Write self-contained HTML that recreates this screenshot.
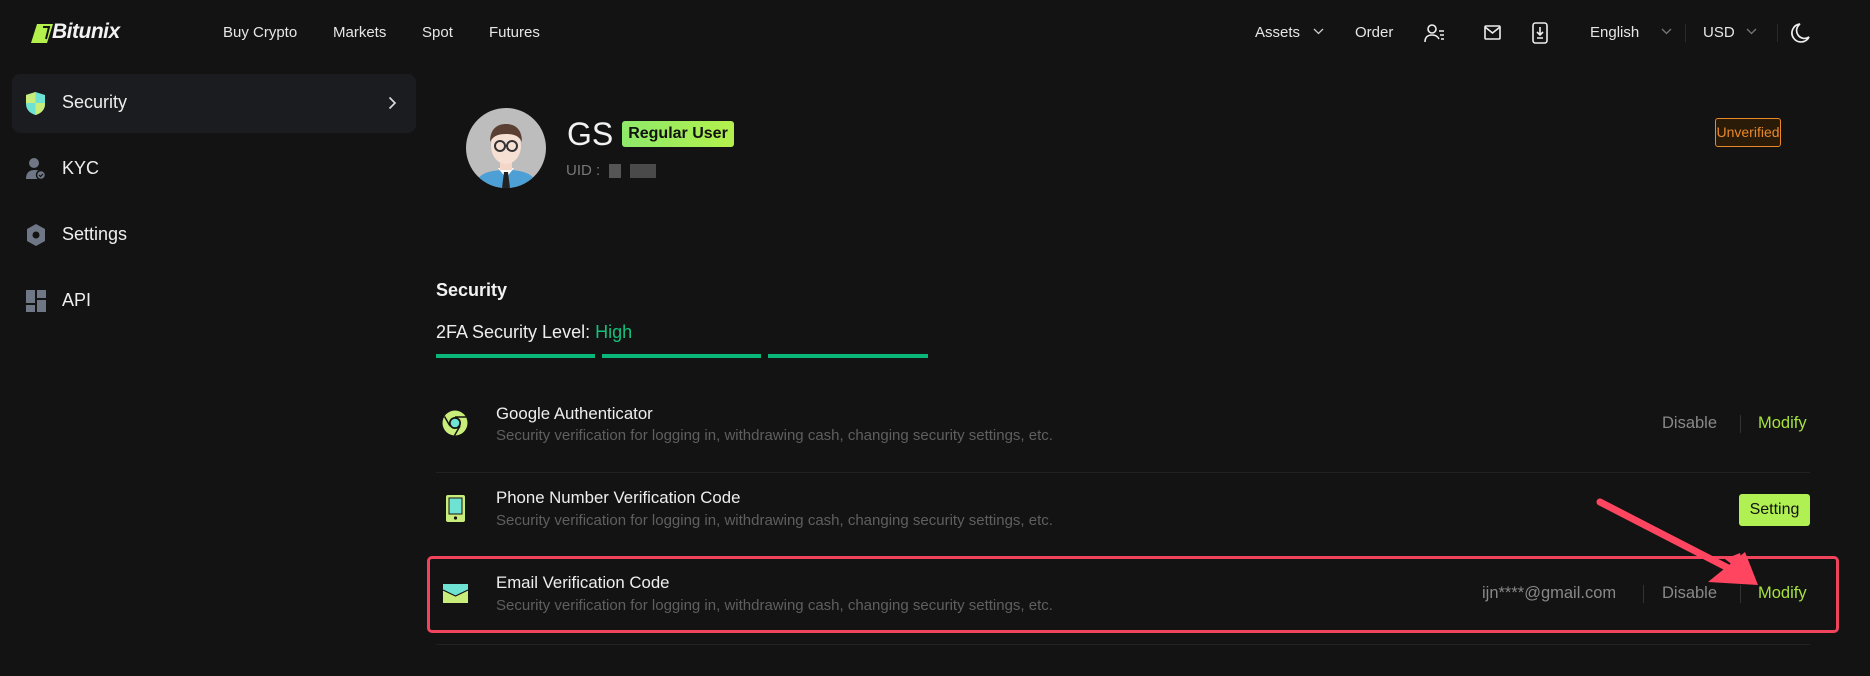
<!DOCTYPE html>
<html><head><meta charset="utf-8"><style>
*{margin:0;padding:0;box-sizing:border-box}
body{width:1870px;height:676px;background:#131313;font-family:"Liberation Sans",sans-serif;color:#e8e8e8;position:relative;overflow:hidden}
.a{position:absolute;white-space:nowrap}
.nav{font-size:15px;color:#e6e6e6;top:24px}
.side{font-size:18px;color:#eee;left:62px}
.t{font-size:16.8px;color:#eee;left:496px}
.d{font-size:15px;color:#5f5f5f;left:496px}
.act{font-size:16.5px}
.vd{position:absolute;width:1px;height:18px;background:#333}
</style></head><body>
<!-- logo -->
<svg class="a" style="left:31px;top:24px" width="22" height="19" viewBox="0 0 22 19"><path d="M6 0H22L16 19H0Z" fill="#b4f04c"/><path d="M12 3h6l-3 12" stroke="#131313" stroke-width="2" fill="none"/></svg>
<div class="a" style="left:52px;top:20px;font-size:21px;font-weight:bold;font-style:italic;color:#f2f2f2;letter-spacing:-0.5px">Bitunix</div>
<div class="a nav" style="left:223px">Buy Crypto</div>
<div class="a nav" style="left:333px">Markets</div>
<div class="a nav" style="left:422px">Spot</div>
<div class="a nav" style="left:489px">Futures</div>
<div class="a nav" style="left:1255px">Assets</div>
<svg class="a" style="left:1313px;top:28px" width="11" height="8"><path d="M1 1l4.5 4.5L10 1" stroke="#ccc" stroke-width="1.3" fill="none"/></svg>
<div class="a nav" style="left:1355px">Order</div>
<svg class="a" style="left:1424px;top:22px" width="22" height="22" viewBox="0 0 22 22" fill="none" stroke="#eee" stroke-width="1.6"><circle cx="8" cy="7" r="4"/><path d="M1 20c0-5 3-7 7-7s6 2 7 4"/><path d="M15 9h5M16 13h4M17 17h3"/></svg>
<svg class="a" style="left:1484px;top:25px" width="17" height="15"><rect x="1" y="1" width="15" height="13" rx="1" fill="none" stroke="#eee" stroke-width="1.6"/><path d="M1 2l7.5 6L16 2" stroke="#eee" stroke-width="1.6" fill="none"/></svg>
<svg class="a" style="left:1532px;top:22px" width="16" height="22"><rect x="1" y="1" width="14" height="20" rx="2.5" fill="none" stroke="#eee" stroke-width="1.6"/><path d="M8 5v8M5 10l3 3 3-3M5 16h6" stroke="#eee" stroke-width="1.6" fill="none"/></svg>
<div class="a nav" style="left:1590px">English</div>
<svg class="a" style="left:1661px;top:28px" width="11" height="8"><path d="M1 1l4.5 4.5L10 1" stroke="#777" stroke-width="1.3" fill="none"/></svg>
<div class="vd" style="left:1685px;top:24px;background:#2a2a2a"></div>
<div class="a nav" style="left:1703px">USD</div>
<svg class="a" style="left:1746px;top:28px" width="11" height="8"><path d="M1 1l4.5 4.5L10 1" stroke="#777" stroke-width="1.3" fill="none"/></svg>
<div class="vd" style="left:1777px;top:24px;background:#2a2a2a"></div>
<svg class="a" style="left:1791px;top:22px" width="20" height="22" viewBox="0 0 20 22"><path d="M9 2A9 9 0 1 0 18 15 7.5 7.5 0 0 1 9 2Z" fill="none" stroke="#eee" stroke-width="1.7"/></svg>
<!-- sidebar -->
<div class="a" style="left:12px;top:74px;width:404px;height:59px;background:#1b1c1f;border-radius:8px"></div>
<svg class="a" style="left:26px;top:92px" width="19" height="23" viewBox="0 0 19 23"><path d="M9.5 0L19 3v9c0 6-4.5 9.5-9.5 11C4.5 21.5 0 18 0 12V3Z" fill="#6ee3d3"/><path d="M9.5 0L0 3v8h9.5ZM9.5 11H19v1c0 6-4.5 9.5-9.5 11Z" fill="#c9ed7a"/></svg>
<div class="a side" style="top:92px">Security</div>
<svg class="a" style="left:388px;top:96px" width="9" height="14"><path d="M1.5 1.5l5.5 5.5-5.5 5.5" stroke="#ddd" stroke-width="1.6" fill="none"/></svg>
<svg class="a" style="left:26px;top:158px" width="20" height="22"><circle cx="8" cy="5" r="5" fill="#6f7787"/><path d="M0 21c0-7 4-9 9-9s7 2 7 3v6Z" fill="#6f7787"/><circle cx="15" cy="17" r="4.5" fill="#6f7787" stroke="#131313" stroke-width="1.5"/><path d="M13 17l1.5 1.5L17 16" stroke="#131313" stroke-width="1.2" fill="none"/></svg>
<div class="a side" style="top:158px">KYC</div>
<svg class="a" style="left:26px;top:224px" width="20" height="22" viewBox="0 0 20 22"><path d="M10 0l9 5v12l-9 5-9-5V5Z" fill="#6f7787"/><circle cx="10" cy="11" r="3.5" fill="#131313"/></svg>
<div class="a side" style="top:224px">Settings</div>
<svg class="a" style="left:26px;top:290px" width="20" height="22"><rect x="0" y="0" width="9" height="13" fill="#6f7787"/><rect x="11" y="0" width="9" height="8" fill="#6f7787"/><rect x="0" y="15" width="9" height="7" fill="#6f7787"/><rect x="11" y="10" width="9" height="12" fill="#6f7787"/></svg>
<div class="a side" style="top:290px">API</div>
<!-- profile -->
<svg class="a" style="left:466px;top:108px" width="80" height="80" viewBox="0 0 80 80"><clipPath id="c"><circle cx="40" cy="40" r="40"/></clipPath><g clip-path="url(#c)"><rect width="80" height="80" fill="#bdbdbd"/><path d="M8 80c2-14 14-18 32-18s30 4 32 18Z" fill="#4ca0d6"/><path d="M32 60h16l-8 10Z" fill="#fff"/><path d="M38 64h4l2 16h-8Z" fill="#222"/><rect x="34" y="50" width="12" height="12" fill="#f3d6c8"/><ellipse cx="40" cy="38" rx="15" ry="18" fill="#f6e0d4"/><path d="M24 34c0-14 8-18 16-18s16 4 16 18c-3-6-8-8-16-8s-13 2-16 8Z" fill="#5a4033"/><circle cx="34" cy="38" r="5" fill="none" stroke="#333" stroke-width="2"/><circle cx="46" cy="38" r="5" fill="none" stroke="#333" stroke-width="2"/></g></svg>
<div class="a" style="left:567px;top:116px;font-size:32px;color:#f2f2f2">GS</div>
<div class="a" style="left:622px;top:121px;width:112px;height:26px;border-radius:3px;background:linear-gradient(90deg,#8eea6a,#b4f04c);color:#111;font-size:16px;font-weight:bold;text-align:center;line-height:26px">Regular User</div>
<div class="a" style="left:566px;top:162px;font-size:15px;color:#777">UID :</div>
<div class="a" style="left:609px;top:164px;width:12px;height:14px;background:#555"></div>
<div class="a" style="left:630px;top:164px;width:26px;height:14px;background:#4a4a4a"></div>
<div class="a" style="left:1715px;top:118px;width:66px;height:29px;border:1px solid #e8892b;border-radius:3px;background:#2a1a08;color:#e8892b;font-size:14px;line-height:27px;text-align:center">Unverified</div>
<!-- security -->
<div class="a" style="left:436px;top:280px;font-size:18px;font-weight:bold;color:#f2f2f2">Security</div>
<div class="a" style="left:436px;top:322px;font-size:18px;color:#eee">2FA Security Level: <span style="color:#14c07c">High</span></div>
<div class="a" style="left:436px;top:354px;width:159px;height:4px;background:#0bb67a"></div>
<div class="a" style="left:602px;top:354px;width:159px;height:4px;background:#0bb67a"></div>
<div class="a" style="left:768px;top:354px;width:160px;height:4px;background:#0bb67a"></div>
<!-- rows -->
<svg class="a" style="left:442px;top:410px" width="26" height="26" viewBox="0 0 26 26"><circle cx="13" cy="13" r="12.5" fill="#c9ed7a"/><circle cx="13" cy="13" r="6" fill="#131313"/><circle cx="13" cy="13" r="4.3" fill="#6ee3d3"/><path d="M13 7H24M8 16L2.5 6.5M18 16l-5.5 9.5" stroke="#131313" stroke-width="1.5"/></svg>
<div class="a t" style="top:404px">Google Authenticator</div>
<div class="a d" style="top:427px">Security verification for logging in, withdrawing cash, changing security settings, etc.</div>
<div class="a act" style="left:1662px;top:414px;color:#888">Disable</div>
<div class="vd" style="left:1740px;top:415px"></div>
<div class="a act" style="left:1758px;top:414px;color:#a6e23f">Modify</div>
<div class="a" style="left:436px;top:472px;width:1374px;height:1px;background:#222"></div>
<svg class="a" style="left:446px;top:495px" width="19" height="27"><rect x="0" y="0" width="19" height="27" rx="2" fill="#c9ed7a"/><rect x="3" y="3" width="13" height="16" fill="#6ee3d3" stroke="#131313" stroke-width="1"/><circle cx="9.5" cy="23" r="1.6" fill="#131313"/></svg>
<div class="a t" style="top:488px">Phone Number Verification Code</div>
<div class="a d" style="top:512px">Security verification for logging in, withdrawing cash, changing security settings, etc.</div>
<div class="a" style="left:1739px;top:494px;width:71px;height:32px;border-radius:3px;background:#b0f052;color:#111;font-size:16px;line-height:32px;text-align:center">Setting</div>
<div class="a" style="left:427px;top:556px;width:1412px;height:77px;border:3px solid #f0435c;border-radius:5px"></div>
<svg class="a" style="left:443px;top:584px" width="25" height="19"><rect width="25" height="19" fill="#c9ed7a"/><path d="M0 0H25V6L12.5 12 0 6Z" fill="#6ee3d3"/><path d="M0 6l12.5 6L25 6" stroke="#131313" stroke-width="1.2" fill="none"/></svg>
<div class="a t" style="top:573px">Email Verification Code</div>
<div class="a d" style="top:597px">Security verification for logging in, withdrawing cash, changing security settings, etc.</div>
<div class="a act" style="left:1482px;top:584px;color:#888">ijn****@gmail.com</div>
<div class="vd" style="left:1643px;top:585px"></div>
<div class="a act" style="left:1662px;top:584px;color:#888">Disable</div>
<div class="vd" style="left:1740px;top:585px"></div>
<div class="a act" style="left:1758px;top:584px;color:#a6e23f">Modify</div>
<div class="a" style="left:436px;top:644px;width:1374px;height:1px;background:#222"></div>
<!-- arrow -->
<svg class="a" style="left:0;top:0" width="1870" height="676"><path d="M1600 502L1732 570" stroke="#ff4560" stroke-width="7" stroke-linecap="round"/><path d="M1757 584L1725 559 1740 553 1747 580Z" fill="#ff4560"/><path d="M1758 585L1708 582 1745 552Z" fill="#ff4560"/></svg>
</body></html>
